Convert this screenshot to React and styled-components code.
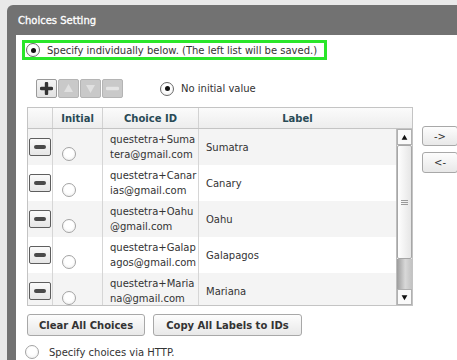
import React from 'react';
import styled, { createGlobalStyle } from 'styled-components';

const GlobalStyle = createGlobalStyle`
  html, body { margin: 0; padding: 0; }
  body { background: #e9e9e9; }
`

const Page = styled.div`
  width: 457px;
  height: 360px;
  overflow: hidden;
  box-sizing: border-box;
  padding: 5px 0 0 7px;
  background: #e9e9e9;
  font-family: "DejaVu Sans", Verdana, sans-serif;
  font-size: 10px;
  color: #333;
`

const Dialog = styled.div`
  width: 470px;
  height: 100%;
  display: flex;
  flex-direction: column;
  background: #727272;
  border-top-left-radius: 6px;
`

const Header = styled.div`
  height: 30px;
  flex-shrink: 0;
  display: flex;
  align-items: center;
  padding-left: 11px;
  color: #fff;
  -webkit-text-stroke: 0.3px #fff;
`

const Body = styled.div`
  flex: 1;
  margin-left: 9px;
  background: #fff;
  padding: 5px 0 0 6px;
  display: flex;
  flex-direction: column;
  align-items: flex-start;
`

const Highlight = styled.div`
  box-sizing: border-box;
  width: 305px;
  height: 20px;
  border: 3px solid #2ae62a;
  display: flex;
  align-items: center;
  padding-left: 1px;
  gap: 7px;
`

const Radio = styled.span`
  box-sizing: border-box;
  width: 14px;
  height: 14px;
  flex-shrink: 0;
  border-radius: 50%;
  border: 1px solid ${props => props.$checked ? '#6a6a6a' : '#a4a4a4'};
  background: radial-gradient(circle at 50% 40%, #ffffff 40%, #ececec 100%);
  display: flex;
  align-items: center;
  justify-content: center;
  &::after {
    content: '';
    display: ${props => props.$checked ? 'block' : 'none'};
    width: 5px;
    height: 5px;
    border-radius: 50%;
    background: #111;
  }
`

const Toolbar = styled.div`
  margin-top: 19px;
  padding-left: 14px;
  display: flex;
  align-items: center;
`

const ToolGroup = styled.div`
  display: flex;
  gap: 1px;
`

const ToolButton = styled.span`
  box-sizing: border-box;
  width: 21px;
  height: 19px;
  border: 1px solid ${props => props.$active ? '#9a9a9a' : '#b4b4b4'};
  border-radius: 2px;
  background: ${props => props.$active ? 'linear-gradient(#f4f4f4, #e2e2e2)' : '#c9c9c9'};
  display: flex;
  align-items: center;
  justify-content: center;
`

const RadioLabel = styled.label`
  display: flex;
  align-items: center;
  gap: ${props => props.$gap || 7}px;
  margin-left: ${props => props.$offset || 0}px;
`

const TableArea = styled.div`
  margin-top: 9px;
  padding-left: 5px;
  display: flex;
  align-items: flex-start;
`

const Table = styled.div`
  box-sizing: border-box;
  width: 386px;
  border: 1px solid #c4c4c4;
`

const HeadRow = styled.div`
  display: grid;
  grid-template-columns: 25px 50px 96px 197px 16px;
  height: 21px;
  box-sizing: border-box;
  border-bottom: 1px solid #c4c4c4;
  background: linear-gradient(#fbfbfb, #ededed);
`

const HeadCell = styled.div`
  display: flex;
  align-items: center;
  justify-content: center;
  border-right: ${props => props.$last ? 'none' : '1px solid #d2d2d2'};
  font-weight: bold;
  color: #294a55;
`

const TableBody = styled.div`
  display: flex;
  height: 176px;
`

const List = styled.div`
  width: 368px;
  height: 100%;
  overflow: hidden;
`

const Row = styled.div`
  display: grid;
  grid-template-columns: 25px 50px 96px 197px;
  height: 36px;
  background: ${props => props.$odd ? '#f4f4f4' : '#fff'};
`

const Cell = styled.div`
  box-sizing: border-box;
  border-right: 1px solid #d6d6d6;
  display: flex;
`

const ButtonCell = styled(Cell)`
  align-items: center;
  justify-content: center;
`

const InitialCell = styled(Cell)`
  padding: 18px 0 0 9px;
`

const IdCell = styled(Cell)`
  padding: 3px 0 0 7px;
  line-height: 15px;
  word-break: break-all;
`

const LabelCell = styled(Cell)`
  align-items: center;
  padding-left: 7px;
  border-right: none;
`

const RemoveButton = styled.span`
  box-sizing: border-box;
  width: 22px;
  height: 18px;
  border: 1px solid #5e5e5e;
  border-radius: 2px;
  background: linear-gradient(#fafafa, #e6e6e6);
  display: flex;
  align-items: center;
  justify-content: center;
  &::after {
    content: '';
    width: 12px;
    height: 4px;
    border-radius: 2px;
    background: #4a4a4a;
  }
`

const Scrollbar = styled.div`
  box-sizing: border-box;
  width: 16px;
  height: 100%;
  border-left: 1px solid #bdbdbd;
  display: flex;
  flex-direction: column;
  background: #f2f2f2;
`

const ScrollButton = styled.span`
  box-sizing: border-box;
  height: 16px;
  flex-shrink: 0;
  border: 1px solid #b0b0b0;
  background: #fafafa;
  display: flex;
  align-items: center;
  justify-content: center;
`

const Thumb = styled.span`
  box-sizing: border-box;
  height: 114px;
  flex-shrink: 0;
  border: 1px solid #a6a6a6;
  border-radius: 2px;
  background: linear-gradient(to right, #fefefe, #e6e6e6);
  display: flex;
  align-items: center;
  justify-content: center;
`

const Track = styled.span`
  flex: 1;
  background: linear-gradient(to right, #9c9c9c, #d8d8d8 55%, #c2c2c2);
`

const SideButtons = styled.div`
  margin: 19px 0 0 9px;
  display: flex;
  flex-direction: column;
  gap: 6px;
`

const PlainButton = styled.span`
  box-sizing: border-box;
  width: ${props => props.$width}px;
  height: ${props => props.$height || 20}px;
  border: 1px solid #a8a8a8;
  border-radius: 3px;
  background: linear-gradient(#fdfdfd, #e8e8e8);
  display: flex;
  align-items: center;
  justify-content: center;
  font-weight: ${props => props.$bold ? 'bold' : 'normal'};
  color: #333;
`

const BottomButtons = styled.div`
  margin-top: 8px;
  padding-left: 5px;
  display: flex;
  gap: 8px;
`

const HttpRow = styled.div`
  margin-top: 9px;
  padding-left: 3px;
`

const Plus = () => (
  <svg width="13" height="13" viewBox="0 0 13 13">
    <path d="M6.5 1.5v10M1.5 6.5h10" stroke="#333" strokeWidth="3.4" strokeLinecap="round" />
  </svg>
)

const Tri = ({ down, color, size = 11 }) => (
  <svg width={size} height={size} viewBox="0 0 11 11">
    <path d={down ? 'M1 2h9L5.5 10z' : 'M1 9h9L5.5 1z'} fill={color} />
  </svg>
)

const Minus = () => (
  <svg width="13" height="13" viewBox="0 0 13 13">
    <path d="M1.5 6.5h10" stroke="#e4e4e4" strokeWidth="3.4" strokeLinecap="round" />
  </svg>
)

const Grip = () => (
  <svg width="7" height="7" viewBox="0 0 7 7">
    <path d="M0 1.5h7M0 3.5h7M0 5.5h7" stroke="#9a9a9a" strokeWidth="1" />
  </svg>
)

const choices = [
  { id: 'questetra+Sumatera@gmail.com', label: 'Sumatra' },
  { id: 'questetra+Canarias@gmail.com', label: 'Canary' },
  { id: 'questetra+Oahu@gmail.com', label: 'Oahu' },
  { id: 'questetra+Galapagos@gmail.com', label: 'Galapagos' },
  { id: 'questetra+Mariana@gmail.com', label: 'Mariana' },
]

const App = () => {
  return (
    <>
      <GlobalStyle />
      <Page>
        <Dialog>
          <Header>Choices Setting</Header>
          <Body>
            <Highlight>
              <Radio $checked />
              <span>Specify individually below. (The left list will be saved.)</span>
            </Highlight>

            <Toolbar>
              <ToolGroup>
                <ToolButton $active><Plus /></ToolButton>
                <ToolButton><Tri color="#e0e0e0" /></ToolButton>
                <ToolButton><Tri down color="#e0e0e0" /></ToolButton>
                <ToolButton><Minus /></ToolButton>
              </ToolGroup>
              <RadioLabel $offset={37}>
                <Radio $checked />
                <span>No initial value</span>
              </RadioLabel>
            </Toolbar>

            <TableArea>
              <Table>
                <HeadRow>
                  <HeadCell />
                  <HeadCell>Initial</HeadCell>
                  <HeadCell>Choice ID</HeadCell>
                  <HeadCell $last>Label</HeadCell>
                  <HeadCell $last />
                </HeadRow>
                <TableBody>
                  <List>
                    {choices.map((c, i) => (
                      <Row key={c.id} $odd={i % 2 === 0}>
                        <ButtonCell><RemoveButton /></ButtonCell>
                        <InitialCell><Radio /></InitialCell>
                        <IdCell>{c.id}</IdCell>
                        <LabelCell>{c.label}</LabelCell>
                      </Row>
                    ))}
                  </List>
                  <Scrollbar>
                    <ScrollButton><Tri color="#111" size={7} /></ScrollButton>
                    <Thumb><Grip /></Thumb>
                    <Track />
                    <ScrollButton><Tri down color="#111" size={7} /></ScrollButton>
                  </Scrollbar>
                </TableBody>
              </Table>
              <SideButtons>
                <PlainButton $width={36}>-&gt;</PlainButton>
                <PlainButton $width={36} $height={21}>&lt;-</PlainButton>
              </SideButtons>
            </TableArea>

            <BottomButtons>
              <PlainButton $width={118} $height={22} $bold>Clear All Choices</PlainButton>
              <PlainButton $width={149} $height={22} $bold>Copy All Labels to IDs</PlainButton>
            </BottomButtons>

            <HttpRow>
              <RadioLabel $gap={10}>
                <Radio />
                <span>Specify choices via HTTP.</span>
              </RadioLabel>
            </HttpRow>
          </Body>
        </Dialog>
      </Page>
    </>
  )
}

export default App;
